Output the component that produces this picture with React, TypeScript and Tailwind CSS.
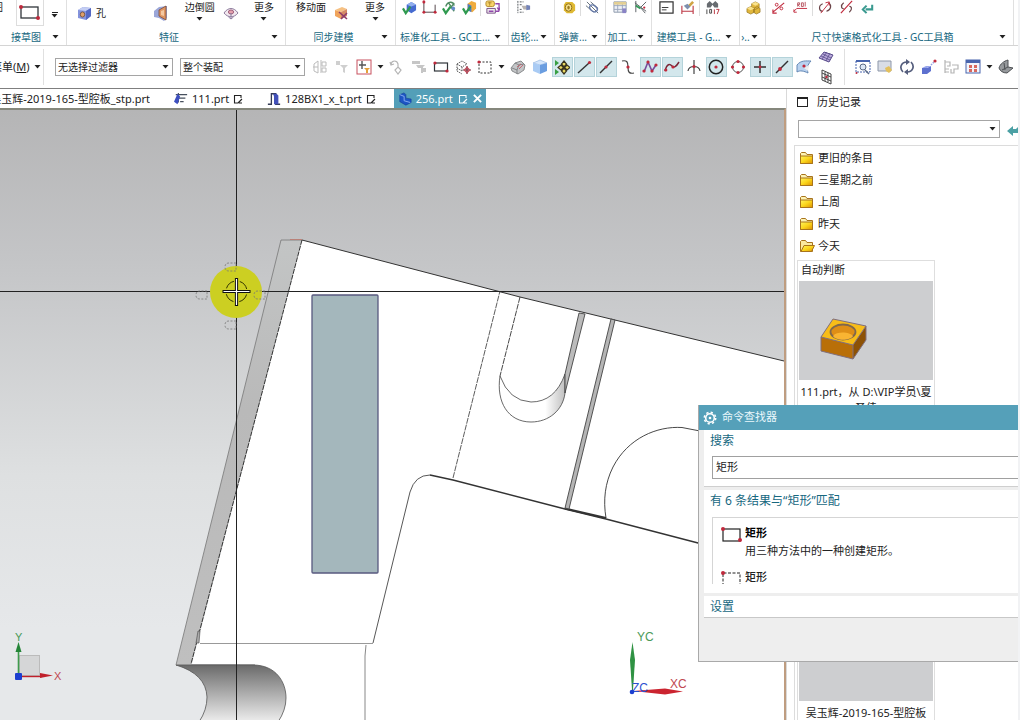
import React from "react";
import type { ReactNode } from "react";

type P = { children?: ReactNode };

/* ---------- shared drawings ---------- */

const Ico = ({ children, size = "h-4 w-4" }: P & { size?: string }) => (
  <svg viewBox="0 0 16 16" className={`${size} shrink-0`} fill="none" aria-hidden="true">
    {children}
  </svg>
);

const Caret = () => (
  <svg viewBox="0 0 7 4" className="h-1 w-[7px] shrink-0" aria-hidden="true">
    <path d="M.5 0h6L3.5 3.6z" fill="#222" />
  </svg>
);

const Check = () => <path d="M1 9l3 5 5-7" stroke="#2f9a4f" strokeWidth="2.4" />;
const Dot = ({ x, y, r = 1.6 }: { x: number; y: number; r?: number }) => (
  <circle cx={x} cy={y} r={r} fill="#c0293c" />
);

const cube = (top: string, left: string, right: string) => (
  <>
    <path d="M2 5l7-3 5 2-6 3z" fill={top} />
    <path d="M2 5l6 2v7l-6-3z" fill={left} />
    <path d="M8 7l6-3v7l-6 3z" fill={right} />
  </>
);

const icons = {
  hole: (<><path d="M1 5l5-3 8 1v8l-5 4-8-2z" fill="#8493dc" /><path d="M1 5l5-3 8 1-5 3z" fill="#c3cdf3" /><path d="M9 6l5-3v8l-5 4z" fill="#5468c4" /><ellipse cx="5.500" cy="9.500" rx="2.200" ry="2.600" fill="#e0a06a" stroke="#744a2a" strokeWidth=".8" /></>),
  chamfer: (<><path d="M1 6l5-4 8-1v12l-3 3-5-3-5-1z" fill="#9ba6d8" /><path d="M6 5l7-4v14l-7-4z" fill="#df9562" stroke="#7c4b38" strokeWidth=".8" /><path d="M8 6l3-1v6l-3-1z" fill="#f4c9a2" /></>),
  shell: (<><path d="M1 8c4-6 10-6 14 0-4 5-10 5-14 0z" fill="#f2e8ee" stroke="#8d7c9e" /><ellipse cx="8" cy="7" rx="2.600" ry="2" fill="#e6a2ae" stroke="#9c5b78" /><path d="M8 8v6M5.500 12L8 14l2.500-2" stroke="#8d7c9e" /></>),
  delFace: (<>{cube("#f6c183", "#f0a45c", "#d58a65")}<path d="M6 7l8 7M14 8l-6 6" stroke="#8d3a6a" strokeWidth="1.600" /></>),
  checkCube: (<><path d="M5 5l5-3 5 3v6l-5 3-5-3z" fill="#466bd0" /><path d="M5 5l5 2 5-2-5-3z" fill="#91aeed" /><Check /></>),
  sketchU: (<><path d="M2 2v11h12V5" stroke="#4b3d42" /><Dot x={2} y={2} /><Dot x={2} y={13} /><Dot x={14} y={13} /></>),
  checkAxes: (<><path d="M4 7c2-6 8-6 9-1M7 3l6 9M13 3l-4 6" stroke="#4f8a62" strokeWidth="1.500" /><circle cx="12" cy="9" r="2" fill="#658bcb" /><Check /></>),
  checkGold: (<><path d="M6 4l4-3 5 2v6l-4 4-5-2z" fill="#f0ac3d" /><path d="M6 4l4 2v7l-4-2z" fill="#4e79ca" /><Check /></>),
  attr: (<><rect x="1" y="1" width="9" height="6" rx="2" fill="#f7d36b" stroke="#b28a2a" /><path d="M5 2v4M3 3h4" stroke="#b28a2a" /><path d="M2 9h9v5H2z" fill="#eee" stroke="#754c83" /><path d="M4 12h5M11 4h4v6M13 8l2 3 1-3M11 12h4" stroke="#9247ad" strokeWidth="1.400" /></>),
  gearBar: (<><path d="M2 1v13M4 2h4M4 5h2M4 10h2M4 13h4" stroke="#4d5257" strokeDasharray="2 1" /><path d="M6 6h9v4H8z" fill="#b8b3b0" /><path d="M11 5l4 1v4l-4 1z" fill="#7383b8" /></>),
  spring: (<><path d="M4 2h7l3 3v6l-3 3H5l-3-3V5z" fill="#dfb933" /><ellipse cx="7" cy="8" rx="3.500" ry="4" fill="#f8e38b" stroke="#8c6b1a" /><ellipse cx="7" cy="8" rx="1.300" ry="2" fill="#9b7a20" /></>),
  springOff: (<><path d="M2 2l12 12M1 6l8 7M6 2l8 7" stroke="#5e6a75" /><ellipse cx="9" cy="9" rx="4.500" ry="3" transform="rotate(35 9 9)" stroke="#6579a8" strokeWidth="1.500" /></>),
  table: (<><path d="M1 2h13v11H1z" fill="#eef1f7" stroke="#8b97aa" /><path d="M1 6h13M1 10h13M5 2v11M10 2v11" stroke="#9ca8bd" /><path d="M1 2h13v3H1z" fill="#e3cf93" /><path d="M10 9h4v5h-4z" fill="#8a83c6" /></>),
  pathSim: (<><path d="M2 3l12 9M3 1v12M14 2L8 8l5 6" stroke="#575d61" /><path d="M3 6l5 3" stroke="#36995a" strokeWidth="2" /><Dot x={12} y={8} r={1.200} /></>),
  note: (<><rect x="1" y="2" width="14" height="12" stroke="#333" strokeWidth="1.300" /><path d="M3 8h7M3 10.500h5" stroke="#333" /></>),
  dim: (<><path d="M2 6v9M14 6v9M2 12h12" stroke="#bd3946" strokeWidth="1.200" /><path d="M8 6l5-5 2 2-5 5z" fill="#d0a444" /><path d="M4 6l4-2 3 3-3 3z" fill="#7f90ae" /></>),
  binocular: (<><path d="M2 4l3-3 3 3 3-3 3 3v4h-4L8 5 6 8H2z" fill="#676b70" /><path d="M2 10v5M5 10h2v4H5z" stroke="#444" /><path d="M10 10v5M12 10h3l-2 5" stroke="#b8323d" /></>),
  blocks: (<><path d="M6 4l4-2 4 2v4l-4 2-4-2zM1 9l4-2 4 2v4l-4 2-4-2zM8 9l4-2 3 2v4l-4 2-3-2z" fill="#e1b73c" stroke="#92731f" strokeWidth=".7" /><path d="M6 4l4 2 4-2-4-2zM1 9l4 2 4-2-4-2z" fill="#f9e28c" /></>),
  dimRun: (<><path d="M1 13L13 3M1 10v4h4" stroke="#c0293c" strokeWidth="1.200" /><circle cx="5" cy="5" r="1.500" stroke="#c0293c" /><circle cx="10" cy="9" r="1.500" stroke="#c0293c" /></>),
  dimRef: (<><path d="M1 12l3-3h11M1 10v3h3" stroke="#c0293c" /><path d="M5 7V3h2v2H5l2 2M9 3v4h2V3zM13 2v5" stroke="#b85460" /></>),
  linkRed: (<><path d="M5 4c-5 2-4 8 0 8M11 3c4 2 3 8-2 9" stroke="#6b4448" strokeWidth="1.300" /><path d="M3 14L12 3M8 3l4-1v4" stroke="#c0293c" /></>),
  unlink: (<><path d="M5 3c-4 3-2 7 0 6M11 13c4-3 2-7 0-6" stroke="#6b4448" strokeWidth="1.300" /><path d="M2 14L14 1" stroke="#c0293c" strokeWidth="1.200" /></>),
  back: (<path d="M13 5v5H6M7 6l-4 4 4 4" stroke="#3a9a90" strokeWidth="2.200" />),
  rect: (<><rect x="1.500" y="4" width="13" height="8" stroke="#30353a" strokeWidth="1.200" /><Dot x={2} y={4} /><Dot x={14} y={12} /></>),

  ghostAsm: (<path d="M2 5l4-3v12l-4-2zM6 8H1M9 1v13M10 3h4v4h-4zM10 9h4v4h-4z" stroke="#bbb" />),
  ghostFilter: (<path d="M2 2h4v4H2zM6 6h8l-3 3v5l-2-1V9z" fill="#cfcfcf" />),
  plane: (<><rect x="1" y="1" width="14" height="14" fill="#fff" stroke="#c8505e" /><path d="M6 2v8M3 6h7" stroke="#555" strokeWidth="1.400" /><path d="M8 9h6l-2 2v3h-2v-3z" fill="#e5a13a" /></>),
  ghostUndo: (<path d="M2 5c1-4 6-4 7 0v3M1 3l1 3 3-1M9 8l3 3-3 4-3-4z" stroke="#b5b5b5" strokeWidth="1.200" />),
  ghostFunnel: (<path d="M1 2h8v3H1zM5 6h9l-2 2v6h-2V9H7zM12 9h3v4h-3z" fill="#c6c6c6" />),
  boxCross: (<><path d="M2 5l5-3 5 3-5 3zM2 9l5 3M2 12l5 3M2 5v7M7 8v4" stroke="#555" strokeDasharray="1.500 1" /><path d="M12 7v8M8 11h8" stroke="#7a2030" strokeWidth="1.200" /><circle cx="12" cy="11" r="2.200" stroke="#c0293c" /></>),
  lasso: (<><rect x="2" y="3" width="12" height="11" stroke="#333" strokeDasharray="2 1.500" /><Dot x={2} y={3} /></>),
  solid: (<><path d="M1 9l4-5 6-2 4 4-1 5-6 4-6-3z" fill="#c3c5c7" stroke="#737679" strokeWidth=".8" /><path d="M2 9l5 2 2-5 5-1M7 11v4M9 6L5 4" stroke="#737679" strokeWidth=".8" /><path d="M7 8l4-3M9 10l4-4" stroke="#c8505e" strokeWidth=".8" /></>),
  blueCube: (<><path d="M1 4l7-3 7 3-7 2z" fill="#d5e6fb" stroke="#7ba3d6" strokeWidth=".5" /><path d="M1 4l7 2v9l-7-3z" fill="#a9cbf4" /><path d="M8 6l7-2v8l-7 3z" fill="#6a9de0" /></>),
  snapAll: (<><path d="M1 1l4 3-4 3zM1 10l4 3-4 3z" fill="#38a043" /><path d="M10 2l2.500 3L10 8 7.500 5zM10 9l2.500 3-2.500 3-2.500-3zM7 6l2.500 2.500L7 11 4 8.500zM13 6l3 2.500-3 2.500-2.500-2.500z" fill="#ecdb62" stroke="#3a3520" strokeWidth="1.200" /></>),
  endLine: (<><path d="M2 14L13 4" stroke="#333" strokeWidth="1.400" /><Dot x={13.500} y={3.500} /></>),
  midLine: (<><path d="M2 14L14 2" stroke="#333" strokeWidth="1.400" /><Dot x={8} y={8} /></>),
  curve: (<><path d="M2 2c5-1 6 1 6 6s1 7 6 6" stroke="#444" strokeWidth="1.200" /><Dot x={8} y={8} /></>),
  zigzag: (<><path d="M2 13L6 3l4 9 4-6" stroke="#764a9b" strokeWidth="1.600" /><Dot x={6} y={3} /><Dot x={2} y={12} /><Dot x={10} y={12} /><Dot x={14} y={6} /></>),
  spline: (<><path d="M1 12c2-8 5-7 7-5s4 1 7-4" stroke="#7a2838" strokeWidth="1.500" /><Dot x={1.800} y={11} /><Dot x={9} y={8} /></>),
  cross: (<><path d="M8 1v14M2 12c1-6 11-6 12 0" stroke="#444" strokeWidth="1.200" /><Dot x={8} y={7.500} /></>),
  center: (<><circle cx="8" cy="8" r="6.700" stroke="#222" strokeWidth="1.500" /><Dot x={8} y={8} /></>),
  quadrant: (<><circle cx="8" cy="8" r="5.500" stroke="#555" /><Dot x={8} y={2.500} /><Dot x={8} y={13.500} /><Dot x={2.500} y={8} /><Dot x={13.500} y={8} /></>),
  plus: (<><path d="M8 2v12M2 8h12" stroke="#333" strokeWidth="1.500" /><Dot x={8} y={8} r={1.400} /></>),
  onLine: (<><path d="M2 14L14 2" stroke="#333" strokeWidth="1.400" /><Dot x={6} y={10} r={1.900} /></>),
  face: (<><path d="M1 6c4-5 9-4 14-4-4 4-4 8-3 12-4-2-8-3-11-1z" fill="#b9d2f0" stroke="#6588b4" /><path d="M8 9l5-3-1 6z" fill="#eee" /><Dot x={8} y={7} /></>),
  mesh: (<><path d="M1 9l5-6 9 3-4 7z" fill="#b9a9da" stroke="#594c8c" /><path d="M3 7l9 4M5 5l8 4M4 10l5-7M8 12l4-8" stroke="#594c8c" strokeWidth=".8" /></>),
  grid: (<><path d="M4 1l9 4v10l-9-4zM7 3v9M10 4v9M4 4l9 4M4 8l9 4" stroke="#444" /><Dot x={8.500} y={8} r={1.200} /></>),
  fit: (<><path d="M1 2h14v11H1z" stroke="#4965ad" strokeDasharray="2 1" /><path d="M1 2h14" stroke="#4965ad" strokeWidth="2" /><circle cx="8" cy="8" r="3" stroke="#5b6b86" fill="#dce7f5" /><path d="M10 11l4 4" stroke="#5b6b86" strokeWidth="1.500" /><Dot x={1.500} y={14} r={1} /></>),
  pan: (<><path d="M1 2h13v10H1z" fill="#d9dde6" stroke="#8d97a9" /><path d="M8 9l4-2 3 4-3 3-3-2z" fill="#e3c05d" /></>),
  rotate: (<><path d="M4 13C0 9 2 3 8 3M12 3c4 4 2 10-4 10" stroke="#555e7d" strokeWidth="1.700" /><path d="M7 0l4 3-4 3zM9 16l-4-3 4-3z" fill="#555e7d" /></>),
  extrude: (<><path d="M1 9h5l4-2v5l-4 3H1z" fill="#5d70cf" /><path d="M1 9l4-2h5L6 9z" fill="#97a5ea" /><path d="M10 6l3-3" stroke="#92a0e4" strokeWidth="1.500" strokeDasharray="1.500 1" /><Dot x={14} y={2} /></>),
  ghostTree: (<path d="M2 1v13M2 3h5v4H4M2 10h4M2 13h4M9 6h6v4h-4v4H8v-4" stroke="#b5b5b5" strokeWidth="1.200" />),
  window: (<><rect x="1" y="1" width="14" height="13" fill="#f3f5fb" stroke="#4965ad" /><path d="M1 1h14v3H1z" fill="#4965ad" /><path d="M4 6h3v3H4zM9 6h3v3H9zM4 10h3v3H4zM9 10h3v3H9z" fill="#d8685e" /></>),
  wedge: (<><path d="M1 9c1-4 5-7 9-8v7l5 1-6 5c-4 0-7-2-8-5z" fill="#96999c" stroke="#4e5154" /><path d="M10 8l-6 3M6 4l1 7" stroke="#4e5154" /></>),
};

type IconName = keyof typeof icons;

/* ---------- ribbon ---------- */

const RibbonIcon = ({ name }: { name: IconName }) => (
  <button className="flex h-4 w-5 shrink-0 justify-center" aria-label={name}>
    <Ico size="h-[15px] w-[15px]">{icons[name]}</Ico>
  </button>
);

const Split = () => <span className="mx-px h-4 w-px shrink-0 bg-[#dcdcdc]" />;

const DropText = ({ children }: P) => (
  <button className="flex shrink-0 flex-col items-center gap-[3px] leading-[14px]">
    {children}
    <Caret />
  </button>
);

const Group = ({ label, w, children }: P & { label: string; w: string }) => (
  <section className={`${w} flex min-w-0 shrink-0 flex-col border-r border-[#e0e0e0]`}>
    <div className="flex h-[30px] items-start">{children}</div>
    <div className="flex h-[14px] items-center overflow-hidden pr-[7px]">
      <span className="flex-1 whitespace-nowrap text-center leading-[14px] text-[#17687f]">{label}</span>
      <Caret />
    </div>
  </section>
);

const Ribbon = () => (
  <header className="flex h-[46px] overflow-hidden border-b border-[#d4d4d4]">
    <Group label="接草图" w="w-[67px]">
      <span className="flex w-full items-start justify-between overflow-hidden pr-2">
        <span className="-ml-[7px] leading-[14px]">图</span>
        <button className="ml-[5px] flex h-[26px] w-7 items-center justify-center border border-t-0 border-[#ddd]" aria-label="矩形">
          <svg viewBox="0 0 22 16" className="h-4 w-[22px]" fill="none">
            <rect x="2" y="2" width="17" height="11" stroke="#30353a" strokeWidth="1.300" />
            <Dot x={2} y={2} r={2} />
            <Dot x={19} y={13} r={2} />
          </svg>
        </button>
        <button className="mt-3 flex flex-col items-center gap-px" aria-label="更多曲线">
          <span className="h-px w-[6px] bg-[#222]" />
          <Caret />
        </button>
      </span>
    </Group>
    <Group label="特征" w="w-[219px]">
      <div className="flex w-full items-start justify-between pl-[10px] pr-[11px]">
        <button className="mt-[5px] flex items-center gap-[3px] leading-4">
          <Ico>{icons.hole}</Ico>孔
        </button>
        <span className="ml-8 mt-[5px] flex"><Ico>{icons.chamfer}</Ico></span>
        <span className="flex gap-2">
          <DropText>边倒圆</DropText>
          <span className="mt-[5px] flex"><Ico>{icons.shell}</Ico></span>
        </span>
        <DropText>更多</DropText>
      </div>
    </Group>
    <Group label="同步建模" w="w-[110px]">
      <div className="flex w-full items-start justify-between px-[10px]">
        <span className="leading-[14px]">移动面</span>
        <span className="mr-[10px] mt-[5px] flex"><Ico>{icons.delFace}</Ico></span>
        <DropText>更多</DropText>
      </div>
    </Group>
    <Group label="标准化工具 - GC工..." w="w-[113px]">
      <div className="flex pl-[3px]">
        <RibbonIcon name="checkCube" /><RibbonIcon name="sketchU" /><RibbonIcon name="checkAxes" /><RibbonIcon name="checkGold" />
        <Split /><RibbonIcon name="attr" />
      </div>
    </Group>
    <Group label="齿轮..." w="w-[46px]">
      <div className="flex pl-1"><RibbonIcon name="gearBar" /></div>
    </Group>
    <Group label="弹簧..." w="w-[51px]">
      <div className="flex pl-1"><RibbonIcon name="spring" /><Split /><RibbonIcon name="springOff" /></div>
    </Group>
    <Group label="加工..." w="w-[46px]">
      <div className="flex pl-1"><RibbonIcon name="table" /><RibbonIcon name="pathSim" /></div>
    </Group>
    <Group label="建模工具 - G..." w="w-[88px]">
      <div className="flex gap-px pl-1"><RibbonIcon name="note" /><RibbonIcon name="dim" /><Split /><RibbonIcon name="binocular" /></div>
    </Group>
    <Group label="›.." w="w-[26px]">
      <div className="flex pl-[3px]"><RibbonIcon name="blocks" /></div>
    </Group>
    <Group label="尺寸快速格式化工具 - GC工具箱" w="flex-1">
      <div className="flex gap-px pl-[3px]">
        <RibbonIcon name="dimRun" /><RibbonIcon name="dimRef" /><Split />
        <RibbonIcon name="linkRed" /><RibbonIcon name="unlink" /><RibbonIcon name="back" />
      </div>
    </Group>
    <span className="w-1 shrink-0" />
  </header>
);

/* ---------- selection bar ---------- */

const Combo = ({ w, value, label }: { w: string; value: string; label: string }) => (
  <div className={`${w} relative shrink-0`}>
    <select aria-label={label} className="block h-[18px] w-full appearance-none border border-[#a5a5a5] bg-white px-[2px] leading-4 text-[#222] outline-none">
      <option>{value}</option>
    </select>
    <span className="pointer-events-none absolute right-1 top-[7px] flex"><Caret /></span>
  </div>
);

const Tool = ({ name, on = false }: { name: IconName; on?: boolean }) => (
  <button aria-label={name} aria-pressed={on} className="flex w-[22px] shrink-0 justify-center">
    <span className={`flex h-5 w-[21px] items-center justify-center ${on ? "border border-[#b4d3da] bg-[#d3e7ec]" : ""}`}>
      <Ico>{icons[name]}</Ico>
    </span>
  </button>
);

const ToolCaret = () => (
  <button aria-label="展开" className="flex w-[11px] shrink-0 justify-center"><Caret /></button>
);

const SelectionBar = () => (
  <nav className="flex h-[43px] items-center overflow-hidden border-b border-[#7f7f7f]">
    <button className="-ml-[9px] flex w-[48px] shrink-0 items-center gap-1 whitespace-nowrap text-[11px]">
      <span>菜单(<u>M</u>)</span>
      <Caret />
    </button>
    <span className="ml-1 mr-[11px] h-9 w-px shrink-0 bg-[#e0e0e0]" />
    <Combo w="w-[118px]" value="无选择过滤器" label="选择过滤器" />
    <span className="w-[7px] shrink-0" />
    <Combo w="w-[125px]" value="整个装配" label="选择范围" />
    <span className="w-1 shrink-0" />
    <Tool name="ghostAsm" /><Tool name="ghostFilter" /><Tool name="plane" /><ToolCaret />
    <Tool name="ghostUndo" /><Tool name="ghostFunnel" /><Tool name="rect" /><Tool name="boxCross" /><Tool name="lasso" /><ToolCaret />
    <Tool name="solid" /><Tool name="blueCube" />
    <Tool name="snapAll" on /><Tool name="endLine" on /><Tool name="midLine" on /><Tool name="curve" />
    <Tool name="zigzag" on /><Tool name="spline" on /><Tool name="cross" /><Tool name="center" on />
    <Tool name="quadrant" /><Tool name="plus" on /><Tool name="onLine" on /><Tool name="face" />
    <span className="flex shrink-0 flex-col"><Tool name="mesh" /><Tool name="grid" /></span>
    <span className="mx-[7px] h-9 w-px shrink-0 bg-[#e0e0e0]" />
    <Tool name="fit" /><Tool name="pan" /><Tool name="rotate" /><Tool name="extrude" /><Tool name="ghostTree" /><Tool name="window" />
    <ToolCaret /><Tool name="wedge" />
  </nav>
);

/* ---------- document tabs ---------- */

const EditMark = () => (
  <svg viewBox="0 0 10 10" className="h-[10px] w-[10px] shrink-0" fill="none" stroke="currentColor" aria-hidden="true">
    <path d="M8 4V1.500H1.500v7.500h4M5 9l4-4M6 9h3" strokeWidth="1.100" />
  </svg>
);

const Tabs = () => (
  <div className="flex h-[19px] items-stretch overflow-hidden whitespace-nowrap text-[11px] leading-[19px]">
    <button className="flex w-[150px] shrink-0 justify-end overflow-hidden">吴玉辉-2019-165-型腔板_stp.prt</button>
    <button className="ml-6 flex items-center gap-1">
      <Ico size="h-[14px] w-[14px]"><path d="M2 3h13M5 1v11M5 7h8M7 11h4" stroke="#47505e" strokeWidth="1.300" /><path d="M0 11l4-9 3 3-3 9z" fill="#3d4fc0" /></Ico>
      111.prt<EditMark />
    </button>
    <button className="ml-6 flex items-center gap-1">
      <Ico size="h-[14px] w-[14px]"><path d="M1 14h4V2h5v12h5" stroke="#333a55" strokeWidth="1.500" /><path d="M7 2h4l2 2v10H8V5z" fill="#4250b8" /></Ico>
      128BX1_x_t.prt<EditMark />
    </button>
    <div className="ml-[18px] flex items-center gap-1 bg-[#539fb8] px-1 text-white">
      <Ico size="h-[14px] w-[14px]"><path d="M2 3l5-2 2 2v4l6 1v4l-6 3-7-4z" fill="#1d55c4" stroke="#0d3791" strokeWidth=".6" /><path d="M2 3l5 2v5l7 2" stroke="#91b6f6" /></Ico>
      256.prt
      <span className="mx-px flex"><EditMark /></span>
      <button aria-label="关闭" className="flex">
        <svg viewBox="0 0 10 10" className="h-[9px] w-[9px]" stroke="#fff" strokeWidth="2.200"><path d="M1 1l8 8M9 1L1 9" /></svg>
      </button>
    </div>
  </div>
);

/* ---------- graphics window ---------- */

const Glyph = ({ x, y }: { x: number; y: number }) => (
  <path d={`M${x + 5} ${y - 4}h-7q-4 0-4 4t4 4h7z`} fill="none" stroke="#777" strokeWidth=".8" strokeDasharray="2 1.500" />
);

const Viewport = () => (
  <svg viewBox="0 110 784 610" preserveAspectRatio="xMinYMin slice" className="absolute inset-0 h-full w-full" role="img" aria-label="256.prt">
    <defs>
      <linearGradient id="sky" x1="0" y1="0" x2="0" y2="1">
        <stop offset="0" stopColor="#b5b5b6" />
        <stop offset=".25" stopColor="#c4c5c7" />
        <stop offset=".6" stopColor="#dee0e1" />
        <stop offset=".85" stopColor="#e6e8ea" />
      </linearGradient>
      <linearGradient id="bore" x1="0" y1="0" x2="0" y2="1">
        <stop offset="0" stopColor="#6a6a6a" />
        <stop offset=".35" stopColor="#999" />
        <stop offset="1" stopColor="#eee" />
      </linearGradient>
      <linearGradient id="side" x1="0" y1="0" x2="0" y2="1">
        <stop offset="0" stopColor="#c3c5c5" />
        <stop offset=".4" stopColor="#b9b9b9" />
        <stop offset="1" stopColor="#bfbfbf" />
      </linearGradient>
      <linearGradient id="fillet" x1="0" y1="0" x2="1" y2="0">
        <stop offset=".7" stopColor="#fff" />
        <stop offset="1" stopColor="#c0c0c0" />
      </linearGradient>
    </defs>
    <rect x="0" y="110" width="784" height="610" fill="url(#sky)" />
    <path d="M302 240L520 297L784 361V720H240V664H192z" fill="#fff" />
    <path d="M176 665H253C276 665 286 682 286 698Q286 710 278 722H199Q207 710 207 697Q206 674 176 665z" fill="url(#bore)" stroke="#555" strokeWidth=".8" />
    <path d="M281 240H302L191 665H176z" fill="url(#side)" />
    <path d="M302 240H281L176 665" fill="none" stroke="#777" strokeWidth=".8" />
    <path d="M176 665H255" stroke="#666" />
    <path d="M302 240L191 664" stroke="#222" strokeDasharray="5 1" strokeWidth=".9" />
    <path d="M290 239.500H302" stroke="#b98178" />
    <path d="M302 240L520 297L784 361" fill="none" stroke="#333" />
    <path d="M196 643l2-12h2l-1 12z" fill="#aaa" stroke="#444" strokeWidth=".6" />
    <path d="M200 643.500H373" stroke="#999" />
    <path d="M373 643L410 492Q415 475 430 475" fill="none" stroke="#444" strokeWidth=".9" />
    <path d="M366 645L365 656V720" fill="none" stroke="#888" />
    <path d="M430 475L453 480L565 509L606 519L700 543.500" fill="none" stroke="#333" strokeWidth="1.400" />
    <path d="M565 508.500L606 518" stroke="#333" strokeWidth="2" />
    <path d="M453 478L500 291" stroke="#333" strokeWidth=".8" strokeDasharray="6 1" />
    <path d="M500 376C496 402 508 422 531 422C549 422 563 410 565 393V374Q555 402 531 402Q509 401 500 376z" fill="url(#fillet)" stroke="#444" strokeWidth=".8" />
    <path d="M520 297L500 376" stroke="#333" strokeWidth=".9" strokeDasharray="6 1" />
    <path d="M579 313L585 314L565 393V374z" fill="#bbb" stroke="#444" strokeWidth=".9" />
    <path d="M611 319L615 320L569 509L565 508z" fill="#b5b5b5" stroke="#444" strokeWidth=".9" />
    <path d="M606 518C603 500 605 483 613 467C628 438 657 426 682 427.500L700 431" fill="none" stroke="#333" strokeWidth=".9" />
    <path d="M0 291.500H784M236.500 110V720" stroke="#222" />
    <rect x="312" y="295" width="66" height="278" rx="1" fill="#a4b7bc" stroke="#58597f" strokeWidth="1.300" />
    <circle cx="236" cy="292" r="26" fill="#cccf22" />
    <Glyph x={231} y={267} /><Glyph x={202} y={295} /><Glyph x={260} y={295} /><Glyph x={231} y={325} />
    <circle cx="236.500" cy="291.500" r="10.500" fill="none" stroke="#333500" strokeDasharray="10.500 6" strokeDashoffset="-3" />
    <path d="M236.500 278v28M222.500 291.500h28" stroke="#111" strokeWidth="3.200" />
    <path d="M236.500 279v26M223.500 291.500h26" stroke="#fff" strokeWidth="1.200" />

    <rect x="19.500" y="655.500" width="20" height="20" fill="#d5d6d7" stroke="#bbb" />
    <path d="M18.500 676V650" stroke="#3f9b4d" strokeWidth="1.600" />
    <path d="M18.500 642l3 10h-6z" fill="#258538" />
    <path d="M22 676.500h20" stroke="#c0202b" strokeWidth="1.400" />
    <path d="M53 675.500l-13-2.500v5z" fill="#c0202b" />
    <rect x="15" y="673" width="7" height="7" rx="1" fill="#1c3fd0" />
    <g fontFamily="Liberation Sans, sans-serif">
      <text x="15" y="641" fontSize="11" fill="#4a9a58">Y</text>
      <text x="54" y="680" fontSize="11" fill="#c04850">X</text>
      <text x="637" y="641" fontSize="12" fill="#4a9a58">YC</text>
      <text x="670" y="688" fontSize="12" fill="#c04850">XC</text>
      <path d="M632.500 642L635 660L633 690H632L630 660z" fill="#2f9243" />
      <path d="M633 691L665 688.500L683 691.500L665 694.500z" fill="#cb2430" />
      <text x="632" y="692" fontSize="12" fill="#2c4fd0">ZC</text>
      <circle cx="632" cy="692" r="2.300" fill="#1c3fd0" />
    </g>
  </svg>
);

/* ---------- history panel ---------- */

const Folder = ({ open = false }: { open?: boolean }) => (
  <svg viewBox="0 0 15 12" className="h-3 w-[15px] shrink-0" aria-hidden="true">
    <defs>
      <linearGradient id="gold" x1="0" y1="0" x2="1" y2="1">
        <stop offset="0" stopColor="#fff45e" />
        <stop offset=".5" stopColor="#fbd51c" />
        <stop offset="1" stopColor="#dd9200" />
      </linearGradient>
    </defs>
    <path d="M.5 11.500v-10l1-1h4l1.500 2h5.500v9z" fill={open ? "#fbe9a0" : "#fdf3b5"} stroke="#a8741c" />
    {open ? (
      <path d="M1 11.500l3-6h10.500l-3 6z" fill="url(#gold)" stroke="#a8741c" />
    ) : (
      <path d="M.5 4h12v7.500H.5z" fill="url(#gold)" stroke="#a8741c" />
    )}
  </svg>
);

const folders = ["更旧的条目", "三星期之前", "上周", "昨天", "今天"];

const History = () => (
  <aside className="flex w-[232px] shrink-0 flex-col overflow-hidden border-l border-[#d9d9d9] text-[11px]">
    <h2 className="flex h-[31px] shrink-0 items-center gap-[9px] pb-[5px] pl-[10px]">
      <span className="h-[10px] w-[11px] border border-t-2 border-[#222]" />
      历史记录
    </h2>
    <div className="flex h-[25px] shrink-0 items-start pl-[11px]">
      <Combo w="w-[202px]" value="" label="历史记录过滤" />
      <button aria-label="返回" className="ml-[7px] mt-1 flex">
        <svg viewBox="0 0 13 13" className="h-[13px] w-[13px]"><path d="M0 7l6-5v3h3l4-4v8H6v3z" fill="#4ba0a4" /></svg>
      </button>
    </div>
    <div className="ml-[7px] min-h-0 flex-1 overflow-hidden border-l border-t border-[#dcdcdc] pl-[2px] pt-px">
      <ul className="pl-[3px]">
        {folders.map((f, i) => (
          <li key={f} className="flex h-[22px] items-center gap-[3px] leading-4">
            <Folder open={i === 4} />
            {f}
          </li>
        ))}
      </ul>
      <article className="mt-[3px] w-[138px] border border-b-0 border-[#dedede] px-px">
        <h3 className="h-5 pl-[2px] leading-[18px]">自动判断</h3>
        <svg viewBox="0 0 134 99" className="h-[99px] w-full bg-[#cdced0]" role="img" aria-label="111.prt">
          <path d="M22 56L34 38L67 45L54 64z" fill="#f8bd18" />
          <path d="M22 56L54 64V78L22 70z" fill="#b96f08" />
          <path d="M54 64L67 45V59L54 78z" fill="#8d5205" />
          <path d="M22 70V56L34 38L67 45V59L54 78zM22 56L54 64L67 45M54 64V78" fill="none" stroke="#806f7d" />
          <ellipse cx="44" cy="51" rx="12.500" ry="7.500" fill="#de8e16" stroke="#80684d" strokeWidth="1.800" />
          <path d="M34 55c3 5 17 5 20 0-3-4-16-5-20 0z" fill="#f9b432" />
        </svg>
        <p className="h-[38px] pt-1 text-center leading-4">111.prt，从 D:\VIP学员\夏圣佳</p>
      </article>
      <article className="mt-[184px] w-[138px] border-x border-[#dedede] px-px">
        <div className="h-[99px] bg-[#cdced0]" />
        <p className="pt-1 text-center leading-4">吴玉辉-2019-165-型腔板</p>
      </article>
    </div>
  </aside>
);

/* ---------- command finder ---------- */

const Finder = () => (
  <div role="dialog" aria-labelledby="finder-title" className="absolute right-0 top-[405px] flex w-[320px] flex-col border-b border-l border-[#a9a9a9] bg-[#eee] text-[11px]">
    <h2 id="finder-title" className="flex h-[25px] items-center gap-[5px] bg-[#55a0b9] pl-1 text-[#eaf8fc]">
      <Ico size="h-[14px] w-[14px]">
        <circle cx="8" cy="8" r="6.500" stroke="#fff" strokeWidth="1.800" strokeDasharray="2.550 2.550" />
        <circle cx="8" cy="8" r="4.900" stroke="#fff" strokeWidth="1.800" />
        <circle cx="8" cy="8" r="1.500" fill="#fff" />
      </Ico>
      命令查找器
    </h2>
    <div className="ml-[5px] flex flex-col gap-[3px]">
      <section className="flex flex-col gap-[5px] border-b border-[#cfcfcf] bg-white pb-[7px] pl-[8px] pt-px">
        <label htmlFor="finder-q" className="-ml-[2px] text-xs leading-5 text-[#17687f]">搜索</label>
        <input id="finder-q" defaultValue="矩形" className="h-[23px] w-full border border-r-0 border-[#a0a0a0] px-[3px] pb-[3px] outline-none" />
      </section>
      <section className="flex flex-col gap-[6px] bg-white pb-[9px] pl-[8px] pt-px">
        <h3 className="-ml-[2px] text-xs leading-5 text-[#17687f]">有 6 条结果与“矩形”匹配</h3>
        <ul className="flex h-[67px] flex-col gap-[8px] overflow-hidden border-l border-t border-[#d5d5d5] pl-2 pt-[6px]">
          <li className="flex gap-[3px]">
            <svg viewBox="0 0 21 18" className="h-[18px] w-[21px] shrink-0" fill="none">
              <rect x="2" y="5" width="17" height="12" stroke="#222" strokeWidth="1.200" />
              <Dot x={2} y={5} r={2} /><Dot x={19} y={16} r={2} />
            </svg>
            <p className="leading-[18px]"><b className="block text-black">矩形</b>用三种方法中的一种创建矩形。</p>
          </li>
          <li className="flex gap-[3px]">
            <svg viewBox="0 0 21 18" className="h-[18px] w-[21px] shrink-0" fill="none">
              <path d="M2 18V5h17v13" stroke="#222" strokeDasharray="3 1.500" />
              <Dot x={2} y={5} r={2} />
            </svg>
            <p className="font-medium leading-[18px]">矩形</p>
          </li>
        </ul>
      </section>
      <h3 className="border-b border-[#c8c8c8] bg-white pl-[6px] text-xs leading-[21px] text-[#17687f]">设置</h3>
    </div>
    <div className="h-[43px]" />
  </div>
);

export default function App() {
  return (
    <div className="relative flex h-screen flex-col overflow-hidden border-r-2 border-[#f1f2f4] bg-white font-['Noto_Sans','Noto_Sans_CJK_SC',sans-serif] text-[10px] text-[#222]">
      <Ribbon />
      <SelectionBar />
      <div className="flex min-h-0 flex-1">
        <main className="flex min-w-0 flex-1 flex-col">
          <Tabs />
          <div className="relative min-h-0 flex-1 overflow-hidden border-r-2 border-t-2 border-r-[#bf9d80] border-t-[#85877c]">
            <Viewport />
          </div>
        </main>
        <History />
      </div>
      <Finder />
    </div>
  );
}
